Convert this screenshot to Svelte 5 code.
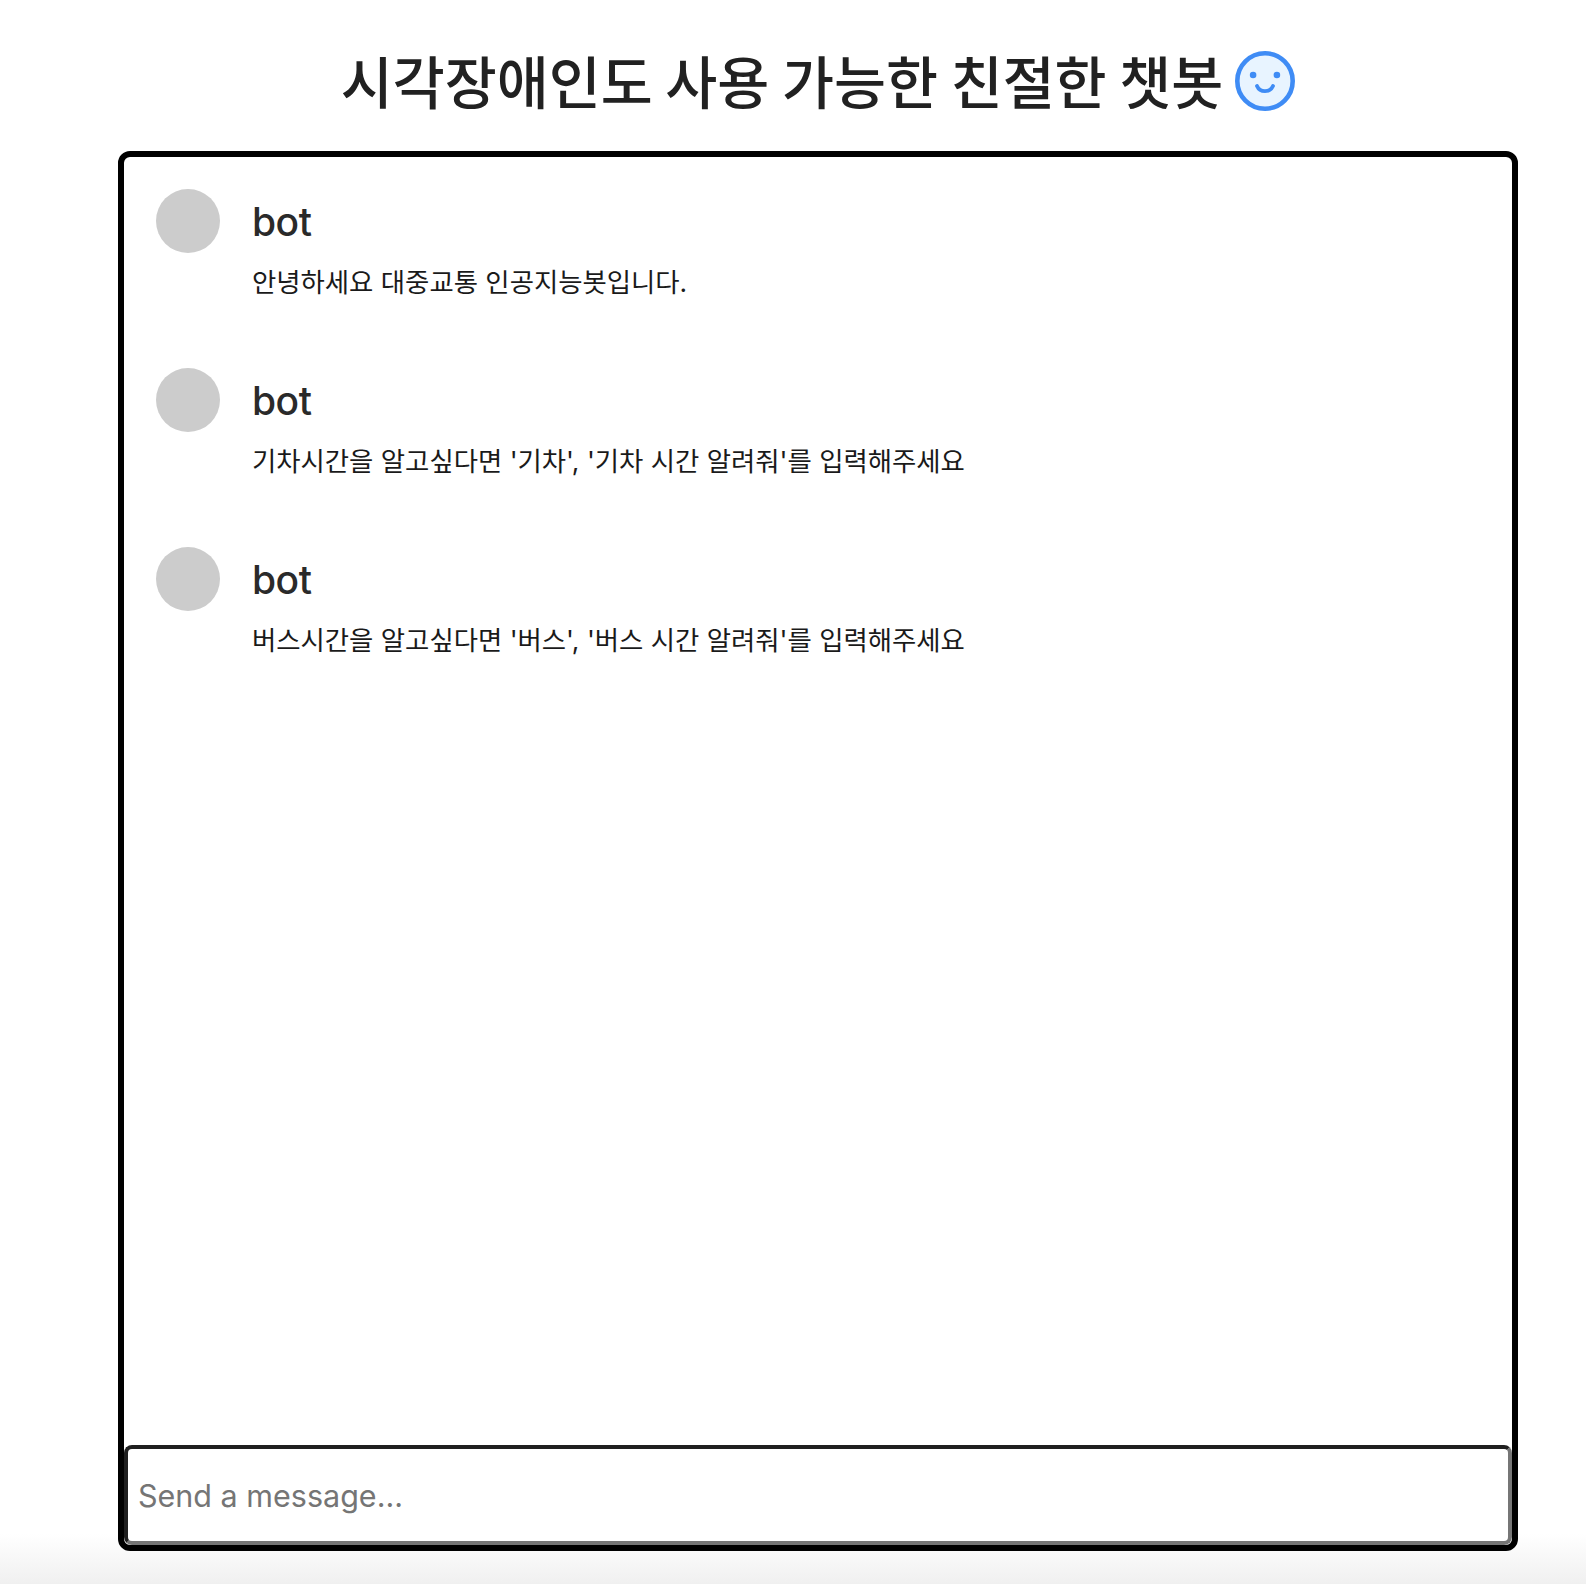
<script>
  const messages = [
    "안녕하세요 대중교통 인공지능봇입니다.",
    "기차시간을 알고싶다면 '기차', '기차 시간 알려줘'를 입력해주세요",
    "버스시간을 알고싶다면 '버스', '버스 시간 알려줘'를 입력해주세요"
  ];
</script>

<div class="page">
  <div class="inner">
    <h1 class="title">
      <span class="title-text">시각장애인도 사용 가능한 친절한 챗봇</span>
      <svg class="smile" viewBox="0 0 60 60" aria-hidden="true">
        <circle cx="30" cy="30" r="27.700" fill="#e8f4ff" stroke="#3f8cf5" stroke-width="4.600" />
        <circle cx="18.100" cy="24" r="3.300" fill="#3f8cf5" />
        <circle cx="41.900" cy="24" r="3.300" fill="#3f8cf5" />
        <path d="M22 35c1.500 3.500 4.500 5.200 8 5.200s6.500-1.700 8-5.200" fill="none" stroke="#3f8cf5" stroke-width="3.800" stroke-linecap="round" />
      </svg>
    </h1>
    <div class="box">
      <div class="list">
        {#each messages as m}
          <div class="msg">
            <div class="avatar"></div>
            <div class="body">
              <div class="name">bot</div>
              <div class="text">{m}</div>
            </div>
          </div>
        {/each}
      </div>
      <input class="field" placeholder="Send a message..." />
    </div>
  </div>
  <div class="fade"></div>
</div>

<style>
  :global(body) {
    margin: 0;
    background: #fff;
  }
  .page {
    height: 1584px;
    overflow: hidden;
    position: relative;
    font-family: Inter, "Noto Sans CJK KR", sans-serif;
    color: #212121;
  }
  .inner {
    width: 1400px;
    margin-left: 118px;
  }
  .title {
    height: 151px;
    margin: 0;
    display: flex;
    justify-content: center;
    align-items: center;
    gap: 14px;
    box-sizing: border-box;
    padding-top: 10px;
    font-size: 56.500px;
    font-weight: 500;
    font-family: "Noto Sans CJK KR", sans-serif;
    white-space: nowrap;
  }
  .title-text {
    margin-bottom: 4px;
  }
  .smile {
    width: 60px;
    height: 60px;
    flex: none;
    margin-left: -2px;
  }
  .box {
    box-sizing: border-box;
    height: 1400px;
    border: 6px solid #000;
    border-radius: 12px;
    display: flex;
    flex-direction: column;
  }
  .list {
    flex: 1;
    padding: 32px 32px 0;
    display: flex;
    flex-direction: column;
    gap: 115px;
  }
  .msg {
    display: flex;
    gap: 32px;
    height: 64px;
  }
  .avatar {
    width: 64px;
    height: 64px;
    border-radius: 50%;
    background: #ccc;
    flex: none;
  }
  .name {
    font-size: 39px;
    line-height: 65px;
    font-weight: 500;
    letter-spacing: -0.500px;
    color: #2a2a2a;
  }
  .text {
    font-size: 26.400px;
    line-height: 36px;
    margin-top: 10px;
    color: #1a1a1a;
    white-space: nowrap;
  }
  .field {
    box-sizing: border-box;
    width: 100%;
    height: 100px;
    flex: none;
    background: #fff;
    border-style: solid;
    border-width: 4px;
    border-color: #1f1f1f #767676 #767676 #1f1f1f;
    border-radius: 8px;
    padding: 0 10px;
    font-family: Inter, sans-serif;
    font-size: 30.500px;
    outline: none;
  }
  .field::placeholder {
    color: #757575;
    opacity: 1;
  }
  .fade {
    position: absolute;
    left: 0;
    right: 0;
    bottom: 0;
    height: 50px;
    background: linear-gradient(#fff, #f0f0f0);
    z-index: -1;
  }
</style>
